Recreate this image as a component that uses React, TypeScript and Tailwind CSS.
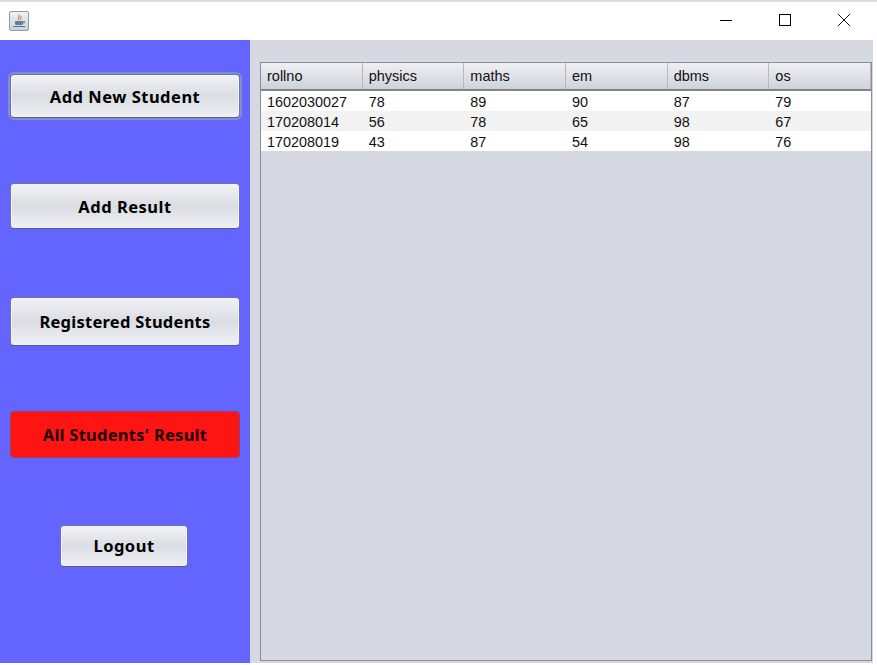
const BUTTON_FACE = 'bg-gradient-to-b from-[#f1f2f5] via-[#dadde3] to-[#eef0f3] border border-[#6f74a6] border-b-[#565b92] shadow-[inset_0_0_0_1px_#f1f2f6]';

const COLUMNS = ['rollno', 'physics', 'maths', 'em', 'dbms', 'os'];

const ROWS = [
  ['1602030027', '78', '89', '90', '87', '79'],
  ['170208014', '56', '78', '65', '98', '67'],
  ['170208019', '43', '87', '54', '98', '76'],
];

function JavaIcon() {
  return (
    <div className="flex h-5 w-5 items-center justify-center rounded-[2px] border border-[#8f9aa8] bg-gradient-to-b from-[#eef2f6] to-[#c9d3de]">
      <svg width="14" height="15" viewBox="0 0 14 15" fill="none">
        <path d="M7 1c1 1.500-1.500 2.500-.5 4.500M9 2.500c.5 1-1 1.500-.5 3" stroke="#e08a4a" strokeWidth="1.300" strokeLinecap="round" />
        <path d="M3 7h8v2.500c0 1-1 1.500-2 1.500H5c-1 0-2-.5-2-1.500z" fill="#5f7f9c" />
        <path d="M11 7.500h1.500v1.500H11" stroke="#5f7f9c" strokeWidth="0.800" />
        <path d="M1.500 12.500h11" stroke="#4f6f8c" strokeWidth="1.200" strokeLinecap="round" />
      </svg>
    </div>
  );
}

function WindowControls() {
  return (
    <div className="flex items-center">
      <div className="flex h-10 w-[59px] items-center justify-center">
        <div className="h-px w-3 bg-black" />
      </div>
      <div className="flex h-10 w-[59px] items-center justify-center">
        <div className="h-3 w-3 border border-black" />
      </div>
      <div className="flex h-10 w-[59px] items-center justify-center">
        <svg width="14" height="14" viewBox="0 0 14 14" stroke="#111" strokeWidth="1" fill="none">
          <path d="M1 1l12 12M13 1L1 13" />
        </svg>
      </div>
    </div>
  );
}

export default function App() {
  return (
    <div className="flex h-[665px] w-[877px] flex-col overflow-hidden bg-white font-['Liberation_Sans',sans-serif] text-black">
      <div className="h-[2px] bg-[#dcdcdc]" />

      <div className="flex h-[38px] items-center justify-between pl-[9px] pr-[4px]">
        <JavaIcon />
        <div className="-mt-[2px]">
          <WindowControls />
        </div>
      </div>

      <div className="flex h-[623px] w-[873px] bg-[#d6d9e2]">
        {/* left menu */}
        <div className="flex h-full w-[250px] shrink-0 flex-col items-start bg-[#6464ff] pl-[10px] font-['Noto_Sans',sans-serif] text-[16.500px] font-bold tracking-[0.5px]">
          <button className={`mt-[34px] flex h-[44px] w-[230px] items-center justify-center rounded-[4px] pt-[3px] ${BUTTON_FACE} ring-2 ring-[#7f8fd0]`}>
            Add New Student
          </button>
          <button className={`mt-[65px] flex h-[46px] w-[230px] items-center justify-center rounded-[4px] pt-[3px] ${BUTTON_FACE}`}>
            Add Result
          </button>
          <button className={`mt-[68px] flex h-[49px] w-[230px] items-center justify-center rounded-[4px] pt-[1px] tracking-[0.25px] ${BUTTON_FACE}`}>
            Registered Students
          </button>
          <button className="mt-[65px] flex h-[47px] w-[230px] items-center justify-center rounded-[4px] border border-[#a03c62] bg-[#ff1414] pt-[1px] tracking-[0.25px] text-[#1a0000]">
            All Students' Result
          </button>
          <button className={`ml-[50px] mt-[67px] flex h-[42px] w-[128px] items-center justify-center rounded-[4px] ${BUTTON_FACE}`}>
            Logout
          </button>
        </div>

        {/* results table */}
        <div className="flex-1 pb-[2px] pl-[10px] pr-[1px] pt-[22px]">
          <div className="h-full border border-[#8a8e98]">
            <div className="grid h-[28px] grid-cols-6 border-b-2 border-[#80848e] bg-gradient-to-b from-[#eef0f3] via-[#dfe1e7] to-[#cfd2da]">
              {COLUMNS.map((col) => (
                <div key={col} className="flex items-center border-r border-[#b4b8c3] pl-[6px] pt-[1px] text-[14.500px] text-[#111]">
                  {col}
                </div>
              ))}
            </div>
            {ROWS.map((row, i) => (
              <div key={row[0]} className={`grid h-[20px] grid-cols-6 ${i % 2 === 1 ? 'bg-[#f2f2f2]' : 'bg-white'}`}>
                {row.map((cell, j) => (
                  <div key={j} className="flex items-center pl-[6px] pt-[1px] text-[14.400px] text-[#111]">
                    {cell}
                  </div>
                ))}
              </div>
            ))}
          </div>
        </div>
      </div>
    </div>
  );
}
